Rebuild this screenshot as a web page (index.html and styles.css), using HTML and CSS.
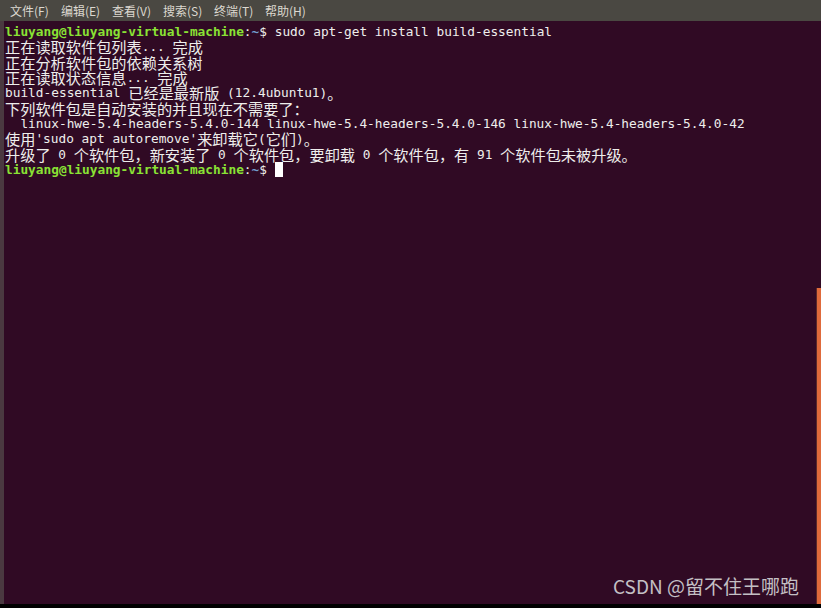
FILE: index.html
```html
<!DOCTYPE html>
<html lang="zh-CN">
<head>
    <meta charset="UTF-8">
    <title>终端</title>
    <link rel="stylesheet" href="styles.css">
</head>
<body>

    <!-- 菜单栏 -->
    <div class="menubar">
        <span>文件(F)</span>
        <span>编辑(E)</span>
        <span>查看(V)</span>
        <span>搜索(S)</span>
        <span>终端(T)</span>
        <span>帮助(H)</span>
    </div>

    <!-- 终端区域 -->
    <div class="window">
        <div class="edge"></div>
        <div class="terminal">
            <div class="line"><span class="user">liuyang@liuyang-virtual-machine</span><span>:</span><span class="path">~</span><span>$ sudo apt-get install build-essential</span></div>
            <div class="line"><span class="zh">正在读取软件包列表</span><span>... </span><span class="zh">完成</span></div>
            <div class="line"><span class="zh">正在分析软件包的依赖关系树</span></div>
            <div class="line"><span class="zh">正在读取状态信息</span><span>... </span><span class="zh">完成</span></div>
            <div class="line"><span>build-essential </span><span class="zh">已经是最新版</span><span> (12.4ubuntu1)</span><span class="zh">。</span></div>
            <div class="line"><span class="zh">下列软件包是自动安装的并且现在不需要了：</span></div>
            <div class="line"><span>  linux-hwe-5.4-headers-5.4.0-144 linux-hwe-5.4-headers-5.4.0-146 linux-hwe-5.4-headers-5.4.0-42</span></div>
            <div class="line"><span class="zh">使用</span><span>'sudo apt autoremove'</span><span class="zh">来卸载它</span><span>(</span><span class="zh">它们</span><span>)</span><span class="zh">。</span></div>
            <div class="line"><span class="zh">升级了</span><span> 0 </span><span class="zh">个软件包，新安装了</span><span> 0 </span><span class="zh">个软件包，要卸载</span><span> 0 </span><span class="zh">个软件包，有</span><span> 91 </span><span class="zh">个软件包未被升级。</span></div>
            <div class="line"><span class="user">liuyang@liuyang-virtual-machine</span><span>:</span><span class="path">~</span><span>$ </span><span class="cursor"></span></div>

            <div class="watermark">CSDN @留不住王哪跑</div>
        </div>
        <div class="scrollbar">
            <div class="thumb"></div>
        </div>
    </div>

    <div class="bottom"></div>

</body>
</html>
```

FILE: styles.css
```css
/* 基本设置 */
* {
    margin: 0;
    padding: 0;
    box-sizing: border-box;
}

body {
    width: 821px;
    height: 608px;
    display: flex;
    flex-direction: column;
    background-color: #300a24;
    overflow: hidden;
}

/* 菜单栏 */
.menubar {
    height: 21px;
    background-color: #4a4842;
    display: flex;
    align-items: center;
    padding-left: 10px;
    gap: 8px;
    font-family: "Noto Sans CJK SC", "Noto Sans", sans-serif;
    font-size: 12px;
    color: #dcd8d0;
}

.menubar span {
    width: 43px;
    white-space: nowrap;
}

/* 窗口 */
.window {
    flex: 1;
    display: flex;
}

.edge {
    width: 4px;
    background-color: #4a3940;
}

.terminal {
    flex: 1;
    position: relative;
    padding: 3px 0 0 1px;
    font-family: "DejaVu Sans Mono", "Liberation Mono", monospace;
    font-size: 12.8px;
    color: #eeeeec;
}

.line {
    height: 15.35px;
    line-height: 15.35px;
    display: flex;
    align-items: center;
    white-space: pre;
}

.zh {
    font-family: "Noto Sans CJK SC", sans-serif;
    font-size: 15.2px;
}

.user {
    color: #8ae234;
    font-weight: bold;
}

.path {
    color: #729fcf;
    font-weight: bold;
}

.cursor {
    width: 8px;
    height: 15px;
    background-color: #ffffff;
}

.watermark {
    position: absolute;
    right: 17px;
    bottom: 5px;
    font-family: "Noto Sans CJK SC", "Noto Sans", sans-serif;
    font-size: 19px;
    color: #c4c0c4;
}

/* 滚动条 */
.scrollbar {
    width: 5px;
    display: flex;
    flex-direction: column;
    justify-content: flex-end;
}

.thumb {
    height: 316px;
    background-color: #df6a3b;
    border-left: 1px solid #5a2a2a;
}

.bottom {
    height: 4px;
    background-color: #000000;
}
```
